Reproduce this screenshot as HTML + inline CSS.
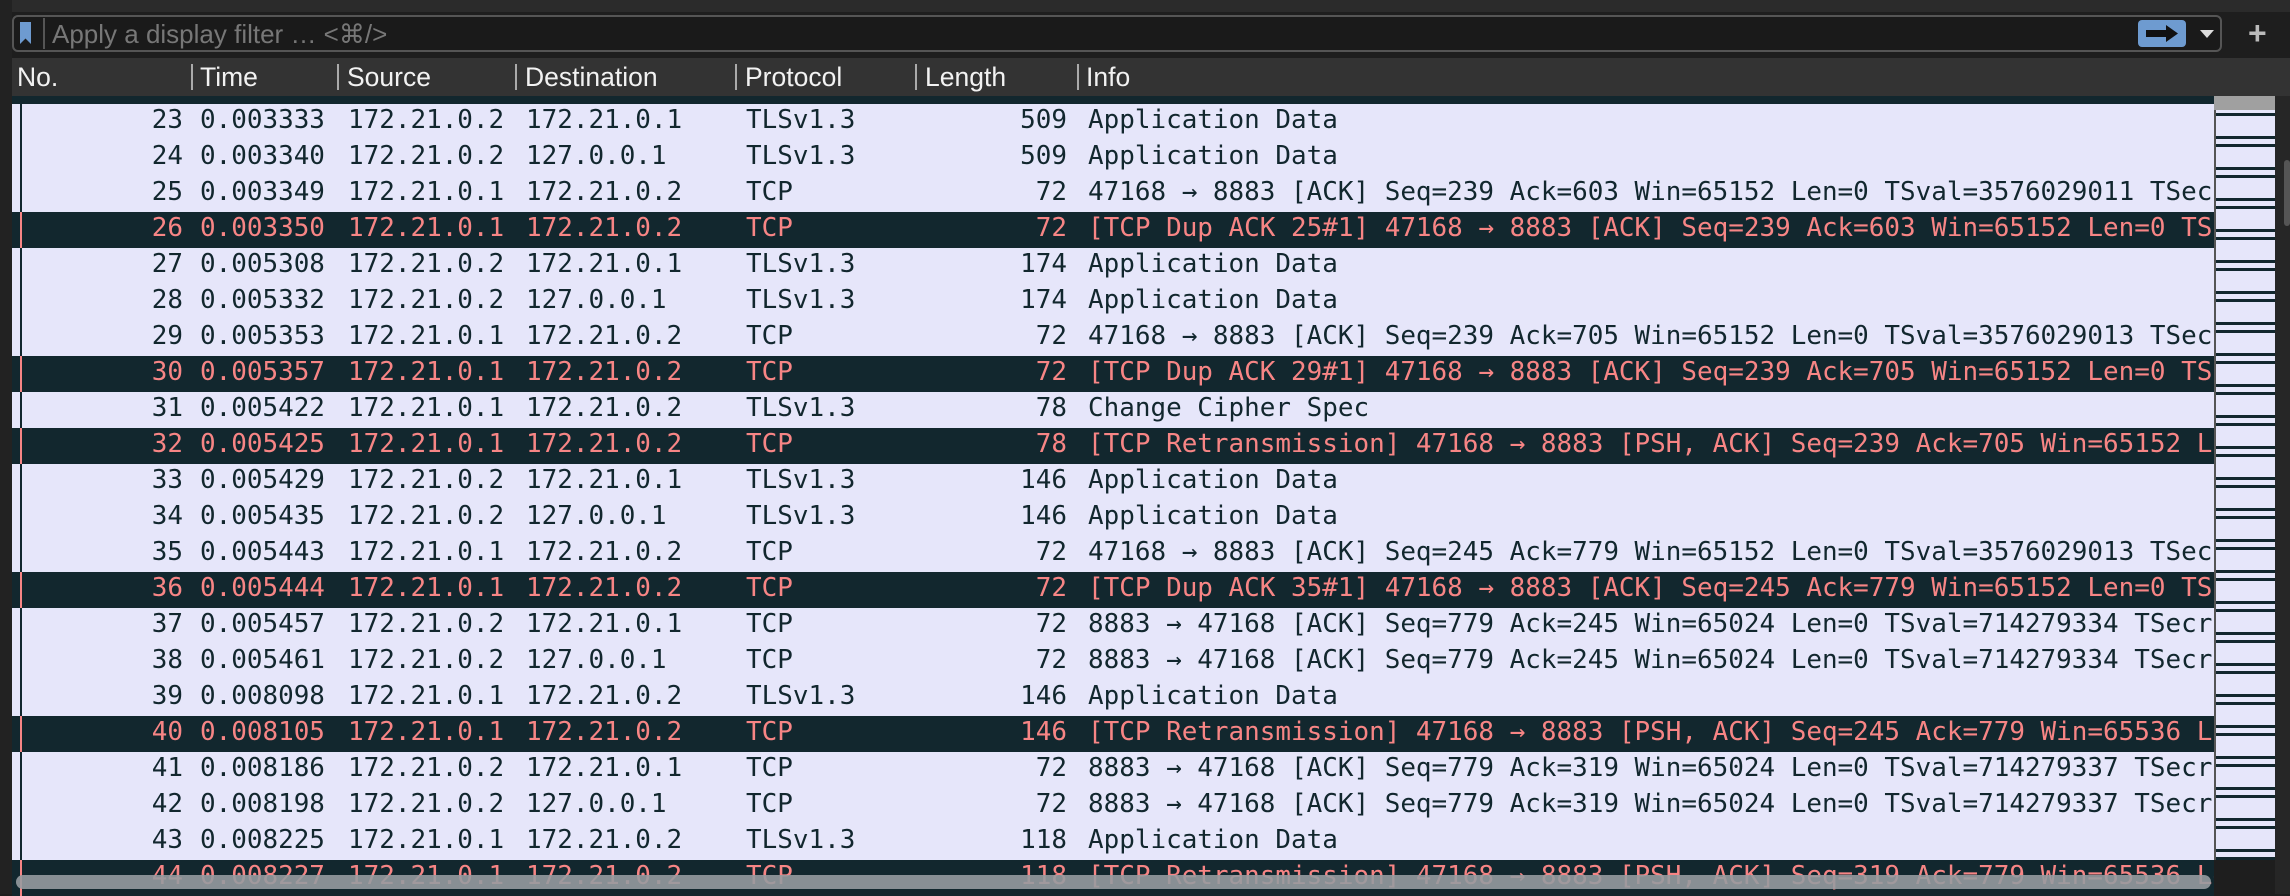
<!DOCTYPE html>
<html><head><meta charset="utf-8"><style>
body{margin:0;width:2290px;height:894px;background:#1e1e1e;overflow:hidden;position:relative;font-family:"Liberation Sans",sans-serif}
.top{position:absolute;left:0;top:0;width:2290px;height:12px;background:#2b2b2b}
.fbar{position:absolute;left:12px;top:15px;width:2210px;height:37px;background:#1a1a1a;border:2px solid #555;border-radius:6px;box-sizing:border-box}
.hdr{position:absolute;left:12px;top:58px;width:2278px;height:38px;background:#333;color:#f2f2f2;font-size:26.5px}
.hdr span{position:absolute;top:4px}
.sep{position:absolute;top:6px;width:2px;height:26px;background:#aaa}
.row{position:absolute;left:12px;width:2202px;height:36px;background:#e6e6fa;color:#12272e;font-family:"DejaVu Sans Mono",monospace;font-size:25.95px;white-space:pre;line-height:36px;overflow:hidden}
.row.d{background:#12272e;color:#f78585}
.row span{position:absolute;top:-2px}
.r{text-align:right}
</style></head><body>
<div class="top"></div>
<div style="position:absolute;left:0;top:0;width:12px;height:894px;background:#222"></div>
<div class="fbar">
 <div style="position:absolute;left:6px;top:5px;width:11px;height:22px;background:#6e9bd0;clip-path:polygon(0 0,100% 0,100% 100%,50% 75%,0 100%)"></div>
 <div style="position:absolute;left:29px;top:1px;width:2px;height:31px;background:#555"></div>
 <div style="position:absolute;left:38px;top:2px;color:#777;font-size:26px">Apply a display filter … &lt;⌘/&gt;</div>
 <div style="position:absolute;left:2124px;top:3px;width:48px;height:27px;background:#6e9bd0;border-radius:4px">
  <svg width="48" height="27" viewBox="0 0 48 27"><path d="M8 10h20v-5l12 8.5-12 8.5v-5H8z" fill="#111"/></svg>
 </div>
 <div style="position:absolute;left:2186px;top:13px;width:0;height:0;border-left:7px solid transparent;border-right:7px solid transparent;border-top:8px solid #ddd"></div>
</div>
<div style="position:absolute;left:2248px;top:15px;color:#bbb;font-size:32px;font-weight:bold">+</div>
<div class="hdr">
 <span style="left:5px">No.</span>
 <div class="sep" style="left:179px"></div><span style="left:188px">Time</span>
 <div class="sep" style="left:325px"></div><span style="left:335px">Source</span>
 <div class="sep" style="left:503px"></div><span style="left:513px">Destination</span>
 <div class="sep" style="left:723px"></div><span style="left:733px">Protocol</span>
 <div class="sep" style="left:903px"></div><span style="left:913px">Length</span>
 <div class="sep" style="left:1065px"></div><span style="left:1074px">Info</span>
</div>
<div style="position:absolute;left:12px;top:96px;width:2202px;height:8px;background:#12272e"></div>
<div id="rows"></div>
<div style="position:absolute;left:2214px;top:96px;width:61px;height:764px;background:#e6e6fa repeating-linear-gradient(180deg,#e6e6fa 0 9px,#12272e 9px 12px,#e6e6fa 12px 17px,#12272e 17px 20px,#e6e6fa 20px 31px);border-left:2px solid #555"></div>
<div style="position:absolute;left:2214px;top:96px;width:61px;height:14px;background:#a0a0a0"></div>
<div style="position:absolute;left:2275px;top:96px;width:15px;height:798px;background:#262626"></div>
<div style="position:absolute;left:2284px;top:160px;width:6px;height:66px;background:#555;border-radius:3px"></div>
<div style="position:absolute;left:16px;top:875px;width:2195px;height:14px;background:rgba(150,155,160,.9);border-radius:7px"></div>
<script>
var R=[
[23,"0.003333","172.21.0.2","172.21.0.1","TLSv1.3",509,"Application Data",0],
[24,"0.003340","172.21.0.2","127.0.0.1","TLSv1.3",509,"Application Data",0],
[25,"0.003349","172.21.0.1","172.21.0.2","TCP",72,"47168 → 8883 [ACK] Seq=239 Ack=603 Win=65152 Len=0 TSval=3576029011 TSec",0],
[26,"0.003350","172.21.0.1","172.21.0.2","TCP",72,"[TCP Dup ACK 25#1] 47168 → 8883 [ACK] Seq=239 Ack=603 Win=65152 Len=0 TS",1],
[27,"0.005308","172.21.0.2","172.21.0.1","TLSv1.3",174,"Application Data",0],
[28,"0.005332","172.21.0.2","127.0.0.1","TLSv1.3",174,"Application Data",0],
[29,"0.005353","172.21.0.1","172.21.0.2","TCP",72,"47168 → 8883 [ACK] Seq=239 Ack=705 Win=65152 Len=0 TSval=3576029013 TSec",0],
[30,"0.005357","172.21.0.1","172.21.0.2","TCP",72,"[TCP Dup ACK 29#1] 47168 → 8883 [ACK] Seq=239 Ack=705 Win=65152 Len=0 TS",1],
[31,"0.005422","172.21.0.1","172.21.0.2","TLSv1.3",78,"Change Cipher Spec",0],
[32,"0.005425","172.21.0.1","172.21.0.2","TCP",78,"[TCP Retransmission] 47168 → 8883 [PSH, ACK] Seq=239 Ack=705 Win=65152 L",1],
[33,"0.005429","172.21.0.2","172.21.0.1","TLSv1.3",146,"Application Data",0],
[34,"0.005435","172.21.0.2","127.0.0.1","TLSv1.3",146,"Application Data",0],
[35,"0.005443","172.21.0.1","172.21.0.2","TCP",72,"47168 → 8883 [ACK] Seq=245 Ack=779 Win=65152 Len=0 TSval=3576029013 TSec",0],
[36,"0.005444","172.21.0.1","172.21.0.2","TCP",72,"[TCP Dup ACK 35#1] 47168 → 8883 [ACK] Seq=245 Ack=779 Win=65152 Len=0 TS",1],
[37,"0.005457","172.21.0.2","172.21.0.1","TCP",72,"8883 → 47168 [ACK] Seq=779 Ack=245 Win=65024 Len=0 TSval=714279334 TSecr",0],
[38,"0.005461","172.21.0.2","127.0.0.1","TCP",72,"8883 → 47168 [ACK] Seq=779 Ack=245 Win=65024 Len=0 TSval=714279334 TSecr",0],
[39,"0.008098","172.21.0.1","172.21.0.2","TLSv1.3",146,"Application Data",0],
[40,"0.008105","172.21.0.1","172.21.0.2","TCP",146,"[TCP Retransmission] 47168 → 8883 [PSH, ACK] Seq=245 Ack=779 Win=65536 L",1],
[41,"0.008186","172.21.0.2","172.21.0.1","TCP",72,"8883 → 47168 [ACK] Seq=779 Ack=319 Win=65024 Len=0 TSval=714279337 TSecr",0],
[42,"0.008198","172.21.0.2","127.0.0.1","TCP",72,"8883 → 47168 [ACK] Seq=779 Ack=319 Win=65024 Len=0 TSval=714279337 TSecr",0],
[43,"0.008225","172.21.0.1","172.21.0.2","TLSv1.3",118,"Application Data",0],
[44,"0.008227","172.21.0.1","172.21.0.2","TCP",118,"[TCP Retransmission] 47168 → 8883 [PSH, ACK] Seq=319 Ack=779 Win=65536 Len=46",1]];
var h="";R.forEach(function(r,i){
h+='<div class="row'+(r[7]?' d':'')+'" style="top:'+(104+i*36)+'px">'+
'<div style="position:absolute;left:8px;top:0;width:2px;height:36px;background:'+(r[7]?'#f78585':'#12272e')+'"></div>'+
'<span class="r" style="left:100px;width:71px">'+r[0]+'</span>'+
'<span style="left:188px">'+r[1]+'</span><span style="left:336px">'+r[2]+'</span><span style="left:514px">'+r[3]+'</span>'+
'<span style="left:734px">'+r[4]+'</span><span class="r" style="left:900px;width:155px">'+r[5]+'</span>'+
'<span style="left:1076px">'+r[6]+'</span></div>';});
document.getElementById("rows").innerHTML=h;
</script>
</body></html>
